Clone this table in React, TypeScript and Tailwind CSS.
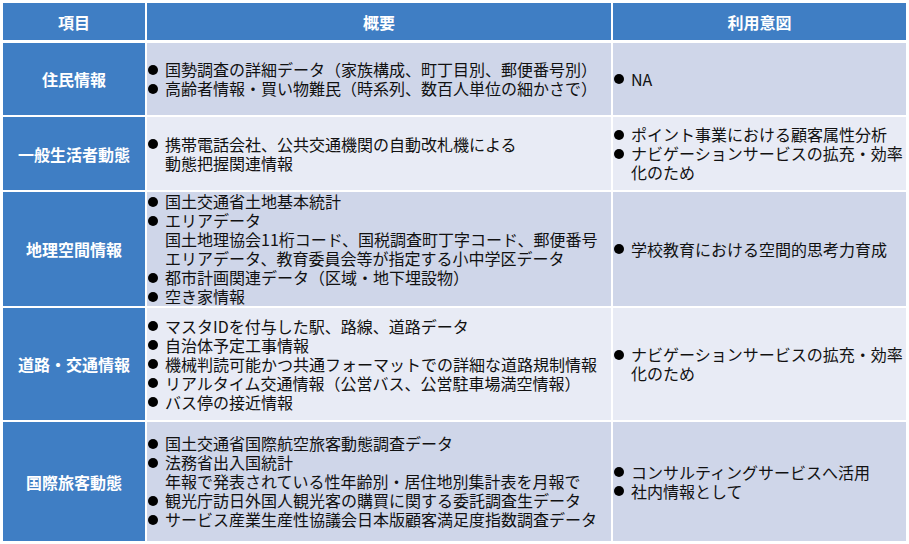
import React from "react";

type Line = { text: string; bullet: boolean };

interface RowData {
    label: string;
    height: string;
    bg: string;
    summary: Line[];
    purpose: Line[];
}

const b = (text: string): Line => ({ text, bullet: true });
const c = (text: string): Line => ({ text, bullet: false });

const rows: RowData[] = [
    {
        label: "住民情報",
        height: "h-[72px]",
        bg: "bg-[#cfd6e9]",
        summary: [
            b("国勢調査の詳細データ（家族構成、町丁目別、郵便番号別）"),
            b("高齢者情報・買い物難民（時系列、数百人単位の細かさで）"),
        ],
        purpose: [b("NA")],
    },
    {
        label: "一般生活者動態",
        height: "h-[73px]",
        bg: "bg-[#e8ebf5]",
        summary: [b("携帯電話会社、公共交通機関の自動改札機による"), c("動態把握関連情報")],
        purpose: [
            b("ポイント事業における顧客属性分析"),
            b("ナビゲーションサービスの拡充・効率"),
            c("化のため"),
        ],
    },
    {
        label: "地理空間情報",
        height: "h-[114px]",
        bg: "bg-[#cfd6e9]",
        summary: [
            b("国土交通省土地基本統計"),
            b("エリアデータ"),
            c("国土地理協会11桁コード、国税調査町丁字コード、郵便番号"),
            c("エリアデータ、教育委員会等が指定する小中学区データ"),
            b("都市計画関連データ（区域・地下埋設物）"),
            b("空き家情報"),
        ],
        purpose: [b("学校教育における空間的思考力育成")],
    },
    {
        label: "道路・交通情報",
        height: "h-[112px]",
        bg: "bg-[#e8ebf5]",
        summary: [
            b("マスタIDを付与した駅、路線、道路データ"),
            b("自治体予定工事情報"),
            b("機械判読可能かつ共通フォーマットでの詳細な道路規制情報"),
            b("リアルタイム交通情報（公営バス、公営駐車場満空情報）"),
            b("バス停の接近情報"),
        ],
        purpose: [b("ナビゲーションサービスの拡充・効率"), c("化のため")],
    },
    {
        label: "国際旅客動態",
        height: "h-[119px]",
        bg: "bg-[#cfd6e9]",
        summary: [
            b("国土交通省国際航空旅客動態調査データ"),
            b("法務省出入国統計"),
            c("年報で発表されている性年齢別・居住地別集計表を月報で"),
            b("観光庁訪日外国人観光客の購買に関する委託調査生データ"),
            b("サービス産業生産性協議会日本版顧客満足度指数調査データ"),
        ],
        purpose: [b("コンサルティングサービスへ活用"), b("社内情報として")],
    },
];

function BulletList({ lines }: { lines: Line[] }) {
    return (
        <div className="flex flex-col">
            {lines.map((line, i) => (
                <div key={i} className="flex items-center whitespace-nowrap leading-[19px]">
                    <span className="w-[17px] shrink-0 flex items-center">
                        {line.bullet && <span className="block w-[10px] h-[10px] rounded-full bg-black" />}
                    </span>
                    <span>{line.text}</span>
                </div>
            ))}
        </div>
    );
}

export default function App() {
    return (
        <div
            className="w-[909px] h-[544px] bg-white p-[3px] text-[16px] text-[#111]"
            style={{ fontFamily: '"Noto Sans CJK JP", "Noto Sans", sans-serif' }}
        >
            <div className="flex flex-col gap-[2px]">
                {/* Header */}
                <div className="grid grid-cols-[142px_464px_293px] gap-x-[2px] h-[37px] mb-[1px] text-white font-bold">
                    <div className="bg-[#3f7ec4] flex items-center justify-center">項目</div>
                    <div className="bg-[#3f7ec4] flex items-center justify-center">概要</div>
                    <div className="bg-[#3f7ec4] flex items-center justify-center">利用意図</div>
                </div>

                {rows.map((row) => (
                    <div key={row.label} className={`grid grid-cols-[142px_464px_293px] gap-x-[2px] ${row.height}`}>
                        <div className="bg-[#3f7ec4] flex items-center justify-center text-white font-bold">
                            {row.label}
                        </div>
                        <div className={`${row.bg} flex items-center pl-[1px]`}>
                            <BulletList lines={row.summary} />
                        </div>
                        <div className={`${row.bg} flex items-center pl-[1px]`}>
                            <BulletList lines={row.purpose} />
                        </div>
                    </div>
                ))}
            </div>
        </div>
    );
}
